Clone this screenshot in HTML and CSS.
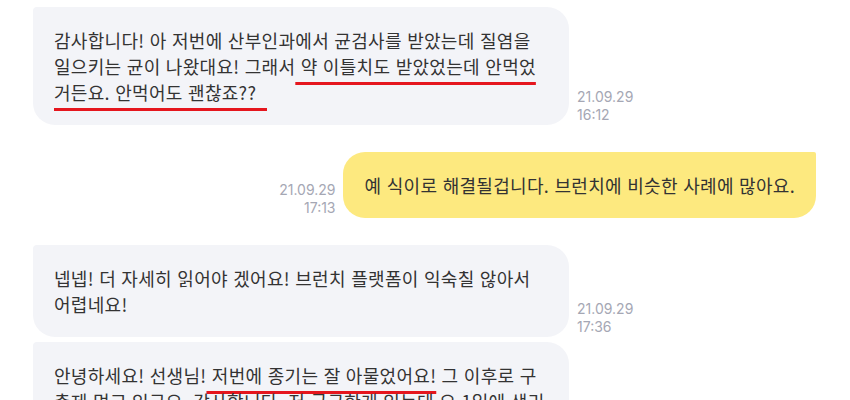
FILE: index.html
```html
<!DOCTYPE html>
<html lang="ko">
<head>
<meta charset="utf-8">
<title>Chat</title>
<link rel="stylesheet" href="styles.css">
</head>
<body>
<div class="chat">
  <div class="row received">
    <div class="bubble">감사합니다! 아 저번에 산부인과에서 균검사를 받았는데 질염을 일으키는 균이 나왔대요! 그래서<span class="mark"> 약 이틀치도 받았었는데 안먹었거든요. 안먹어도 괜찮죠??&nbsp;&nbsp;</span></div>
    <div class="time">21.09.29<br>16:12</div>
  </div>
  <div class="row sent">
    <div class="time">21.09.29<br>17:13</div>
    <div class="bubble">예 식이로 해결될겁니다. 브런치에 비슷한 사례에 많아요.</div>
  </div>
  <div class="row received">
    <div class="bubble">넵넵! 더 자세히 읽어야 겠어요! 브런치 플랫폼이 익숙칠 않아서 어렵네요!</div>
    <div class="time">21.09.29<br>17:36</div>
  </div>
  <div class="row received cont">
    <div class="bubble">안녕하세요! 선생님!<span class="mark"> 저번에 종기는 잘 아물었어요!</span> 그 이후로 구충제 먹고 있구요. 감사합니다. 저 궁금한게 있는데 요 1일에 생리를 시작했는데 평소보다 양이 많아서요.</div>
    <div class="time">21.09.29<br>17:40</div>
  </div>
</div>
</body>
</html>
```

FILE: styles.css
```css
html, body {
  margin: 0;
  padding: 0;
  background: #ffffff;
}

.chat {
  padding: 7px 34px 0 33px;
  display: flex;
  flex-direction: column;
}

.row {
  display: flex;
  align-items: flex-end;
  gap: 8px;
  margin-top: 27px;
}

.row:first-child {
  margin-top: 0;
}

.row.cont {
  margin-top: 5px;
}

.row.sent {
  justify-content: flex-end;
  gap: 7px;
}

.bubble {
  font-family: "Noto Sans CJK KR", "Noto Sans", sans-serif;
  font-size: 18px;
  letter-spacing: 0.3px;
  line-height: 26px;
  color: #333333;
  padding: 20px 23px 20px 21px;
  max-width: 536px;
  box-sizing: border-box;
  border-radius: 4px 22px 22px 22px;
  background: #f3f4f8;
}

.sent .bubble {
  background: #fde97f;
  border-radius: 22px 2px 22px 22px;
  padding: 20px 21px 20px 22px;
}

.received .bubble {
  width: 536px;
}

.mark {
  text-decoration: underline;
  text-decoration-color: #e5161e;
  text-decoration-thickness: 3px;
  text-underline-offset: 8px;
  text-decoration-skip-ink: none;
}

.time {
  font-family: "Inter", "Liberation Sans", sans-serif;
  font-size: 14px;
  line-height: 18px;
  color: #a5a7b4;
  padding-bottom: 1px;
}

.sent .time {
  text-align: right;
}
```
